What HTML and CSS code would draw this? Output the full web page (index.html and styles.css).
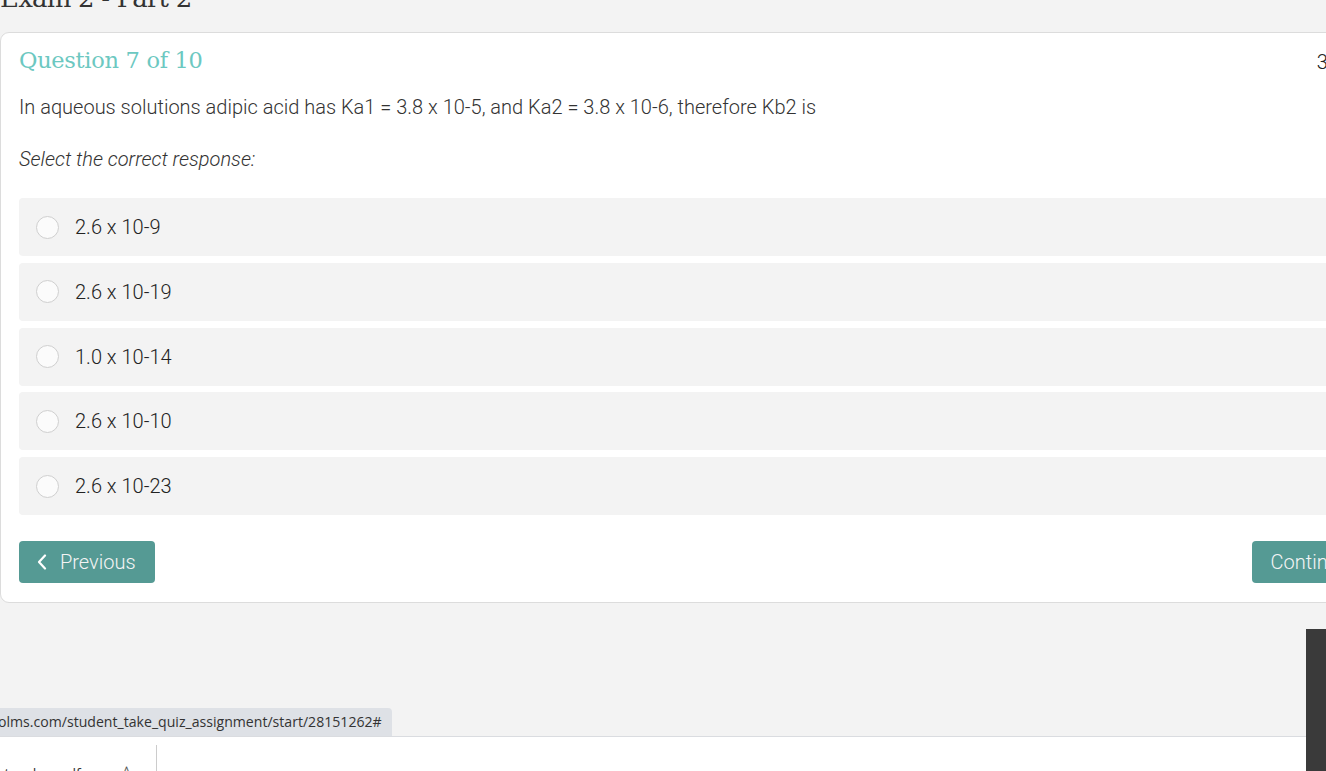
FILE: index.html
```html
<!DOCTYPE html>
<html>
<head>
<meta charset="utf-8">
<link rel="stylesheet" href="styles.css">
</head>
<body>
<main class="page">
  <h1 class="page-title">Exam 2 - Part 2</h1>
  <section class="card">
    <div class="card-head">
      <h2 class="q-title">Question 7 of 10</h2>
      <span class="points">3 points</span>
    </div>
    <p class="q-text">In aqueous solutions adipic acid has Ka1 = 3.8 x 10-5, and Ka2 = 3.8 x 10-6, therefore Kb2 is</p>
    <p class="q-hint">Select the correct response:</p>
    <ul class="options">
      <li class="option"><span class="radio"></span><span class="opt-text">2.6 x 10-9</span></li>
      <li class="option"><span class="radio"></span><span class="opt-text">2.6 x 10-19</span></li>
      <li class="option"><span class="radio"></span><span class="opt-text">1.0 x 10-14</span></li>
      <li class="option"><span class="radio"></span><span class="opt-text">2.6 x 10-10</span></li>
      <li class="option"><span class="radio"></span><span class="opt-text">2.6 x 10-23</span></li>
    </ul>
    <div class="actions">
      <button class="btn"><svg class="chev" width="10" height="16" viewBox="0 0 10 16"><path d="M8 1.5 L2 8 L8 14.5" fill="none" stroke="#fff" stroke-width="2.2" stroke-linecap="round" stroke-linejoin="round"/></svg>Previous</button>
      <button class="btn btn-next">Continue</button>
    </div>
  </section>
</main>
<div class="status-bubble">olms.com/student_take_quiz_assignment/start/28151262#</div>
<div class="download-shelf">
  <div class="dl-item"><span class="dl-name">ntes de ...pdf</span><span class="dl-caret">^</span></div>
</div>
<div class="dark-edge"></div>
</body>
</html>
```

FILE: styles.css
```css
html, body {
  margin: 0;
  padding: 0;
  overflow: hidden;
  width: 1326px;
  height: 771px;
  background: #f3f3f3;
}
body {
  font-family: Roboto, "Liberation Sans", sans-serif;
  color: #333;
}
.page {
  width: 1410px;
}
.page-title {
  margin: -18px 0 0 0;
  height: 32px;
  font-family: "DejaVu Serif", serif;
  font-weight: normal;
  font-size: 26px;
  line-height: 32px;
  color: #333;
  letter-spacing: -0.8px;
  white-space: nowrap;
}
.card {
  margin-top: 18px;
  box-sizing: border-box;
  width: 1410px;
  background: #fff;
  border: 1px solid #dcdcdc;
  border-radius: 9px;
  padding: 12px 18px 19px 18px;
}
.card-head {
  display: flex;
  justify-content: space-between;
  align-items: center;
  height: 30px;
}
.q-title {
  margin: 0;
  font-family: "DejaVu Serif", serif;
  font-weight: normal;
  font-size: 22.5px;
  letter-spacing: -0.3px;
  color: #6cc8c1;
}
.points {
  font-size: 20px;
  font-weight: 300;
  color: #222;
  padding-top: 4px;
  margin-right: 4px;
}
.q-text {
  margin: 19px 0 0 0;
  font-size: 20px;
  font-weight: 300;
  line-height: 26px;
}
.q-hint {
  margin: 26px 0 0 0;
  font-size: 20px;
  font-weight: 300;
  font-style: italic;
  line-height: 26px;
}
.options {
  list-style: none;
  margin: 26px 0 0 0;
  padding: 0;
  display: flex;
  flex-direction: column;
  gap: 6.75px;
}
.option {
  display: flex;
  align-items: center;
  height: 58px;
  background: #f3f3f3;
  border-radius: 4px;
  padding-left: 17px;
}
.radio {
  box-sizing: border-box;
  width: 23px;
  height: 23px;
  border-radius: 50%;
  border: 1px solid #cfcfcf;
  background: #fbfbfb;
}
.opt-text {
  margin-left: 16px;
  font-size: 20px;
  font-weight: 300;
  color: #222;
}
.actions {
  display: flex;
  justify-content: space-between;
  margin-top: 26px;
}
.btn {
  height: 42px;
  background: #559a94;
  border: none;
  border-radius: 4px;
  color: #f4f4f4;
  font-family: Roboto, "Liberation Sans", sans-serif;
  font-size: 20px;
  font-weight: 300;
  padding: 0 19px 0 18px;
  display: flex;
  align-items: center;
  gap: 13px;
}
.btn-next {
  margin-right: 23px;
  padding: 0 19px;
}
.status-bubble {
  position: fixed;
  left: 0;
  top: 708px;
  height: 28px;
  width: 392px;
  box-sizing: border-box;
  background: #dee1e6;
  border-top-right-radius: 4px;
  font-family: "Open Sans", "Noto Sans", sans-serif;
  font-size: 14.1px;
  line-height: 28px;
  color: #333;
  white-space: nowrap;
  overflow: hidden;
  text-indent: -2px;
}
.download-shelf {
  position: fixed;
  left: 0;
  top: 736px;
  width: 1326px;
  height: 35px;
  background: #fff;
  border-top: 1px solid #dadce0;
}
.dl-item {
  width: 156px;
  height: 26px;
  margin-top: 8px;
  border-right: 1px solid #ccc;
  position: relative;
  overflow: hidden;
}
.dl-name {
  position: absolute;
  left: -4px;
  top: 19px;
  font-family: "Open Sans", "Noto Sans", sans-serif;
  font-size: 14px;
  color: #333;
  white-space: nowrap;
}
.dl-caret {
  position: absolute;
  left: 124px;
  top: 20px;
  font-size: 12px;
  color: #555;
}
.dark-edge {
  position: fixed;
  left: 1306px;
  top: 629px;
  width: 20px;
  height: 142px;
  background: #3a3a3a;
}
```
